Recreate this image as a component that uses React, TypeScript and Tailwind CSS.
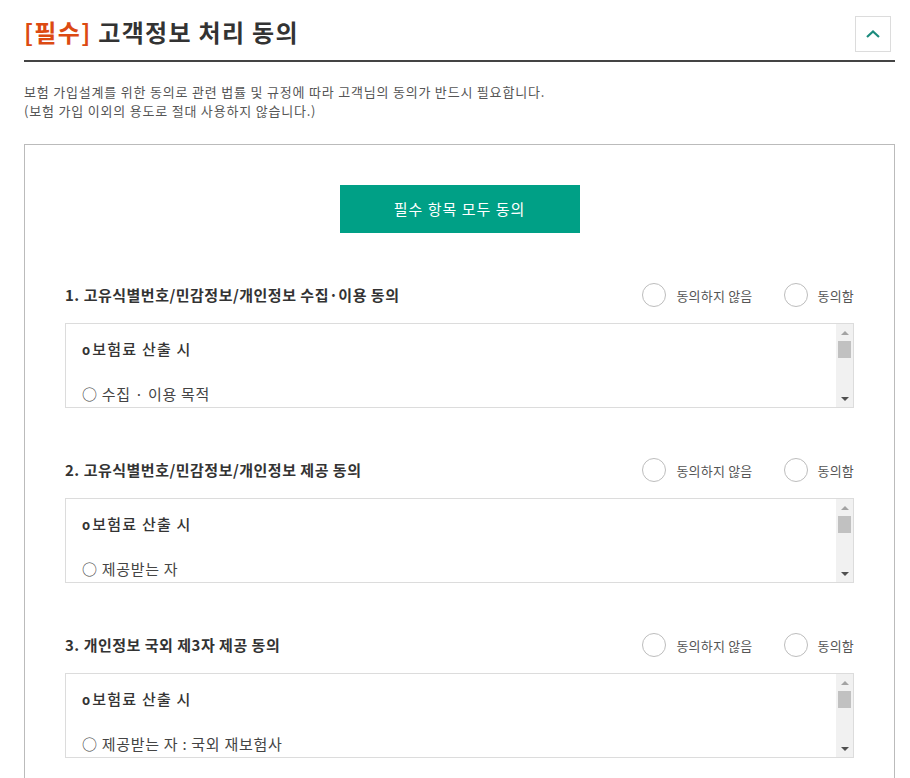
import React from 'react';

const font = { fontFamily: '"Noto Sans CJK KR", "Noto Sans", sans-serif' };

const sections = [
  { title: '1. 고유식별번호/민감정보/개인정보 수집·이용 동의', line: '수집 · 이용 목적' },
  { title: '2. 고유식별번호/민감정보/개인정보 제공 동의', line: '제공받는 자' },
  { title: '3. 개인정보 국외 제3자 제공 동의', line: '제공받는 자 : 국외 재보험사' },
];

function Radio({ label }: { label: string }) {
  return (
    <label className="flex items-center gap-[10px] cursor-pointer">
      <span className="w-[24px] h-[24px] rounded-full border border-[#bdbdbd] bg-white" />
      <span className="text-[13px] text-[#555] leading-none tracking-[0.2px]">{label}</span>
    </label>
  );
}

function FakeScrollbar() {
  return (
    <div className="w-[17px] bg-[#f1f1f1] flex flex-col items-center">
      <div className="h-[17px] flex items-center justify-center">
        <svg width="8" height="4" viewBox="0 0 8 4">
          <polygon points="0,4 4,0 8,4" fill="#a3a3a3" />
        </svg>
      </div>
      <div className="w-[13px] h-[17px] bg-[#c1c1c1]" />
      <div className="flex-1" />
      <div className="h-[17px] flex items-center justify-center">
        <svg width="8" height="4" viewBox="0 0 8 4">
          <polygon points="0,0 8,0 4,4" fill="#505050" />
        </svg>
      </div>
    </div>
  );
}

function Section({ title, line }: { title: string; line: string }) {
  return (
    <div className="mb-[50px]">
      <div className="flex items-center justify-between h-[24px]">
        <h3 className="text-[15px] font-semibold text-[#333] tracking-[0.5px]">{title}</h3>
        <div className="flex items-center gap-[31px]">
          <Radio label="동의하지 않음" />
          <Radio label="동의함" />
        </div>
      </div>
      <div className="mt-[16px] h-[85px] border border-[#dcdcdc] flex">
        <div className="flex-1 overflow-hidden pl-[16px] pt-[14px] text-[15px] leading-[22px] text-[#444] tracking-[0.7px]">
          <p className="font-medium text-[#333] tracking-[1.2px]">
            <span className="text-[13px] font-bold mr-[1px]">o</span>보험료 산출 시
          </p>
          <p>&nbsp;</p>
          <p>○ {line}</p>
        </div>
        <FakeScrollbar />
      </div>
    </div>
  );
}

export default function App() {
  return (
    <div className="bg-white min-h-[778px] pl-6 pr-[15px]" style={font}>
      {/* Header */}
      <div className="flex items-center justify-between pt-[16px] pb-[8px] border-b-2 border-[#444]">
        <h2 className="text-[24px] font-bold text-[#333] leading-[36px] -mt-[5px] tracking-[1.3px]">
          <span className="text-[#dc4a12]">[필수]</span> 고객정보 처리 동의
        </h2>
        <button className="w-[36px] h-[36px] mr-[4px] border border-[#dcdcdc] bg-white flex items-center justify-center">
          <svg width="14" height="8" viewBox="0 0 14 8" fill="none">
            <path d="M1 7 L7 1.5 L13 7" stroke="#1b8b7d" strokeWidth="2.2" />
          </svg>
        </button>
      </div>

      <div className="mt-[20px] text-[13px] leading-[19px] text-[#555] tracking-[0.8px]">
        <p>보험 가입설계를 위한 동의로 관련 법률 및 규정에 따라 고객님의 동의가 반드시 필요합니다.</p>
        <p>(보험 가입 이외의 용도로 절대 사용하지 않습니다.)</p>
      </div>

      <div className="mt-[24px] border border-[#bbb] px-[40px] pt-[40px]">
        <div className="flex justify-center mb-[50px]">
          <button className="w-[240px] h-[48px] bg-[#00a086] text-white text-[15px] tracking-[1px]">필수 항목 모두 동의</button>
        </div>
        {sections.map((s) => (
          <Section key={s.title} title={s.title} line={s.line} />
        ))}
      </div>
    </div>
  );
}
